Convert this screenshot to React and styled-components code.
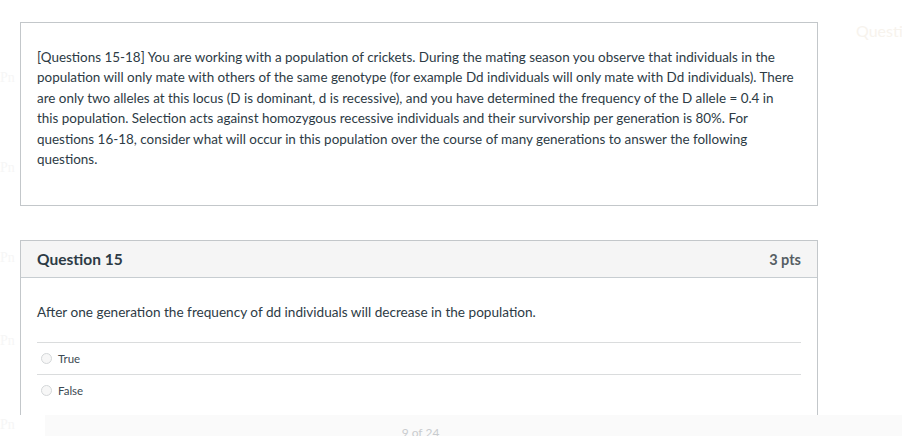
import React from 'react';
import styled, { createGlobalStyle } from 'styled-components';

const GlobalStyle = createGlobalStyle`
  html, body {
    margin: 0;
    padding: 0;
    background: #fff;
  }
  body {
    font-family: Lato, "Open Sans", "Liberation Sans", sans-serif;
    color: #2d3b45;
    overflow: hidden;
  }
`;

const Page = styled.div`
  position: relative;
  width: 902px;
  height: 436px;
  display: flex;
  flex-direction: column;
  overflow: hidden;
`;

const Main = styled.div`
  height: 415px;
  overflow: hidden;
  display: flex;
`;

const Content = styled.div`
  width: 798px;
  padding: 22px 0 0 20px;
  display: flex;
  flex-direction: column;
  gap: 34px;
`;

const Side = styled.div`
  flex: 1;
  padding: 21px 0 0 38px;
  font-size: 16px;
  color: #f7f3ed;
  white-space: nowrap;
  overflow: hidden;
`;

const Card = styled.div`
  border: 1px solid #c3c7ca;
  background: #fff;
  flex-shrink: 0;
`;

const Passage = styled.div`
  height: 182px;
  box-sizing: border-box;
  padding: 24px 20px 0 16px;
  font-size: 13.45px;
  line-height: 20.4px;
  color: #2d3b45;
`;

const Header = styled.div`
  height: 36px;
  display: flex;
  align-items: center;
  justify-content: space-between;
  padding: 0 16px;
  background: #f5f5f5;
  border-bottom: 1px solid #c7cdd1;
`;

const Title = styled.div`
  font-size: 15.5px;
  font-weight: 700;
  color: #2d3b45;
`;

const Points = styled.div`
  font-size: 14.5px;
  font-weight: 700;
  color: #555e64;
`;

const Body = styled.div`
  padding: 24px 16px 40px 16px;
`;

const Prompt = styled.div`
  font-size: 13.6px;
  line-height: 20px;
  margin-bottom: 20px;
`;

const Answer = styled.label`
  display: flex;
  align-items: center;
  gap: 6px;
  height: 30px;
  box-sizing: content-box;
  padding: 0 0 3px 4px;
  margin-bottom: -2px;
  border-top: 1px solid #dadcdd;
  font-size: 11.5px;
  color: #3c4a53;
`;

const Radio = styled.span`
  width: 9px;
  height: 9px;
  border-radius: 50%;
  border: 1px solid #d4d7d9;
  background: #f7f7f7;
  flex-shrink: 0;
`;

const Footer = styled.div`
  flex: 1;
  display: flex;
  align-items: flex-end;
  justify-content: center;
  background: #fafafa;
  margin-left: 45px;
  padding-right: 106px;
  font-size: 12px;
  color: #c9cccf;
  line-height: 6px;
  overflow: hidden;
`;

const Ghost = styled.div`
  position: absolute;
  left: 0;
  top: ${(p) => p.top}px;
  font-family: "Liberation Serif", serif;
  font-size: 14px;
  color: #f6f6f6;
`;

const ghostRows = [70, 160, 250, 333, 417];

export default function App() {
  return (
    <>
      <GlobalStyle />
      <Page>
        <Main>
          <Content>
            <Card>
              <Passage>
                [Questions 15-18] You are working with a population of crickets. During the mating season you observe that
                individuals in the population will only mate with others of the same genotype (for example Dd individuals will
                only mate with Dd individuals). There are only two alleles at this locus (D is dominant, d is recessive), and you
                have determined the frequency of the D allele = 0.4 in this population. Selection acts against homozygous
                recessive individuals and their survivorship per generation is 80%. For questions 16-18, consider what will occur
                in this population over the course of many generations to answer the following questions.
              </Passage>
            </Card>
            <Card>
              <Header>
                <Title>Question 15</Title>
                <Points>3 pts</Points>
              </Header>
              <Body>
                <Prompt>After one generation the frequency of dd individuals will decrease in the population.</Prompt>
                <Answer>
                  <Radio />
                  True
                </Answer>
                <Answer>
                  <Radio />
                  False
                </Answer>
              </Body>
            </Card>
          </Content>
          <Side>Question</Side>
        </Main>
        <Footer>9 of 24</Footer>
        {ghostRows.map((t) => (
          <Ghost key={t} top={t}>Pn</Ghost>
        ))}
      </Page>
    </>
  );
}
